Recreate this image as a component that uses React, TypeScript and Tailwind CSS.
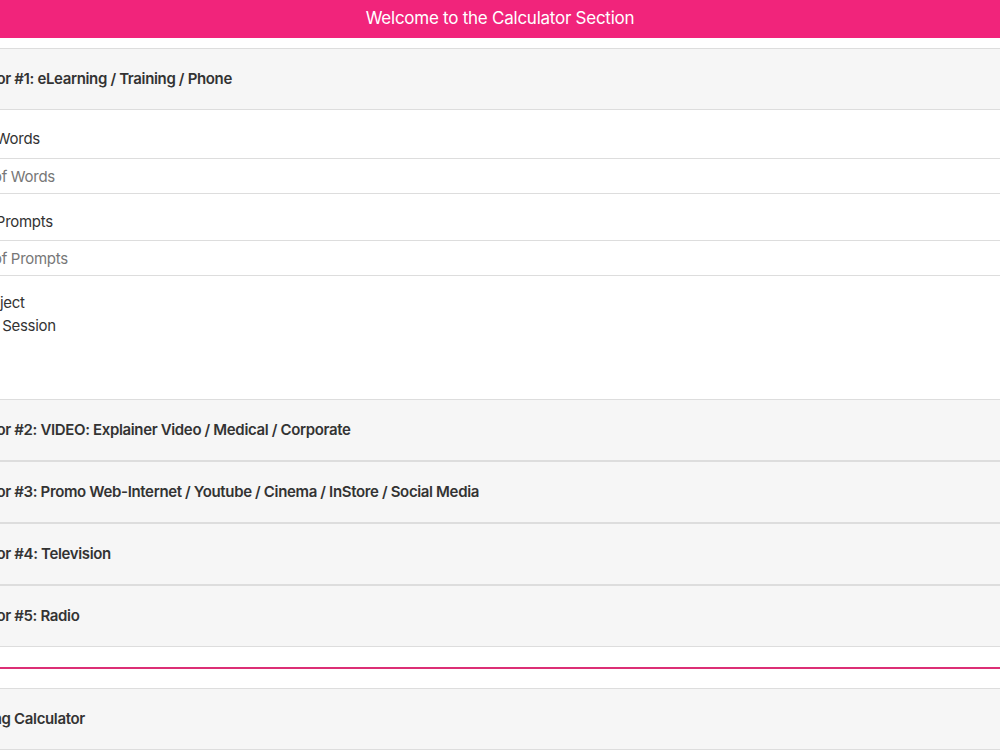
import React from "react";

const headings = [
  "Calculator #2: VIDEO: Explainer Video / Medical / Corporate",
  "Calculator #3: Promo Web-Internet / Youtube / Cinema / InStore / Social Media",
  "Calculator #4: Television",
  "Calculator #5: Radio",
];

function PanelHeading({ title }: { title: string }) {
  return (
    <div className="h-[62px] border-y border-[#dddddd] bg-[#f6f6f6] flex items-center pl-[22px]">
      <span className="text-[15px] font-semibold text-[#333333] whitespace-nowrap tracking-[-0.35px]">{title}</span>
    </div>
  );
}

export default function App() {
  return (
    <div className="w-[1000px] h-[750px] overflow-hidden bg-white" style={{ fontFamily: "Inter, 'Noto Sans', sans-serif" }}>
      <header className="h-[38px] bg-[#f1247b] flex items-center justify-center">
        <h1 className="text-[17px] text-white font-normal tracking-[-0.25px]">Welcome to the Calculator Section</h1>
      </header>
      <main className="mt-[10px] -ml-[82px] w-[1100px]">
        <section>
          <PanelHeading title="Calculator #1: eLearning / Training / Phone" />
          <div className="h-[289px] flex flex-col text-[15px] text-[#333333] tracking-[-0.3px]">
            <label className="pt-[20px] pb-[10px] leading-[18px] pl-[1px]">Number of Words</label>
            <input
              className="h-[36px] border-y border-[#dddddd] pl-[16px] outline-none tracking-[-0.3px] placeholder:text-[#777777]"
              placeholder="Number of Words"
            />
            <label className="pt-[19px] pb-[9px] leading-[18px] pl-[1px]">Number of Prompts</label>
            <input
              className="h-[36px] border-y border-[#dddddd] pl-[16px] outline-none tracking-[-0.3px] placeholder:text-[#777777]"
              placeholder="Number of Prompts"
            />
            <div className="pt-[17px] pl-[32px] flex flex-col gap-[4px] leading-[19px]">
              <label>Per Project</label>
              <label className="pl-[3px]">Hourly Session</label>
            </div>
          </div>
        </section>
        {headings.map((h) => (
          <PanelHeading key={h} title={h} />
        ))}
        <div className="pt-[20px] pb-[19px]">
          <div className="w-full h-[2px] bg-[#dc2f75]" />
        </div>
        <PanelHeading title="Recording Calculator" />
      </main>
    </div>
  );
}
